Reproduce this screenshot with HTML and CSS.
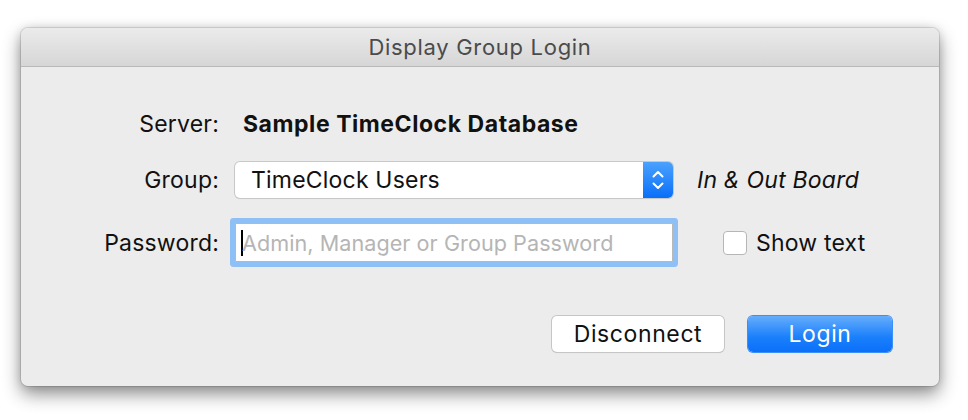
FILE: index.html
```html
<!DOCTYPE html>
<html>
<head>
<meta charset="utf-8">
<link rel="stylesheet" href="styles.css">
</head>
<body>
<div class="window">
  <div class="titlebar">Display Group Login</div>
  <div class="content">
    <div class="form">
      <div class="label">Server:</div>
      <div class="server-value">Sample TimeClock Database</div>
      <div></div>

      <div class="label">Group:</div>
      <div class="popup">
        <span class="popup-text">TimeClock Users</span>
        <span class="stepper">
          <svg width="14" height="24" viewBox="0 0 14 24"><path d="M2.5 8.5 L7 4 L11.5 8.5" fill="none" stroke="#fff" stroke-width="2" stroke-linecap="round" stroke-linejoin="round"/><path d="M2.5 15.5 L7 20 L11.5 15.5" fill="none" stroke="#fff" stroke-width="2" stroke-linecap="round" stroke-linejoin="round"/></svg>
        </span>
      </div>
      <div class="board">In &amp; Out Board</div>

      <div class="label">Password:</div>
      <div class="field"><span class="caret"></span><span class="placeholder">Admin, Manager or Group Password</span></div>
      <div class="show"><span class="checkbox"></span><span>Show text</span></div>
    </div>
    <div class="buttons">
      <div class="btn">Disconnect</div>
      <div class="btn primary">Login</div>
    </div>
  </div>
</div>
</body>
</html>
```

FILE: styles.css
```css
html, body {
  margin: 0;
  padding: 0;
  background: #ffffff;
}
body {
  font-family: "Inter", "Liberation Sans", Arial, sans-serif;
  padding: 28px 0 0 21px;
  height: 420px;
  box-sizing: border-box;
}
.window {
  width: 918px;
  height: 358px;
  background: #ececec;
  border-radius: 7px;
  box-shadow: 0 8px 18px rgba(0,0,0,0.45), 0 0 0 1px rgba(0,0,0,0.10), 0 0 10px rgba(0,0,0,0.12);
  overflow: hidden;
  display: flex;
  flex-direction: column;
}
.titlebar {
  height: 39px;
  box-sizing: border-box;
  border-bottom: 1px solid #b9b9b9;
  background: linear-gradient(#ebebeb, #d6d6d6);
  text-align: center;
  font-size: 22px;
  line-height: 39px;
  color: #4b4b4b;
  letter-spacing: 0.7px;
}
.content {
  flex: 1;
  display: flex;
  flex-direction: column;
  padding-top: 41px;
}
.form {
  display: grid;
  grid-template-columns: 198px 438px auto;
  column-gap: 16px;
  row-gap: 0;
  align-items: center;
  font-size: 23px;
  letter-spacing: 0.2px;
  color: #111;
}
.label {
  text-align: right;
}
.server-value {
  font-weight: 700;
  padding-left: 8px;
  height: 32px;
  line-height: 32px;
  letter-spacing: 0.55px;
}
.form > .label:nth-child(1) { height: 32px; line-height: 32px; }
.popup {
  margin-top: 22px;
  height: 36px;
  box-sizing: border-box;
  background: #fff;
  border-radius: 5px;
  box-shadow: 0 0 0 1px #c8c8c8, 0 1px 1px rgba(0,0,0,0.12);
  display: flex;
  align-items: center;
  overflow: hidden;
}
.popup-text {
  flex: 1;
  padding-left: 16px;
}
.stepper {
  width: 30px;
  height: 36px;
  background: linear-gradient(#4aa2fd, #0a6ff9);
  display: flex;
  align-items: center;
  justify-content: center;
}
.board {
  margin-top: 22px;
  margin-left: 8px;
  font-style: italic;
}
.form > .label:nth-child(4) { margin-top: 22px; }
.form > .label:nth-child(7) { margin-top: 25px; }
.field {
  margin-top: 25px;
  height: 39px;
  box-sizing: border-box;
  background: #fff;
  border: 1px solid #b8b8b8;
  box-shadow: 0 0 0 5px #8fc0f5;
  border-radius: 1px;
  display: flex;
  align-items: center;
  padding-left: 5px;
}
.caret {
  width: 2px;
  height: 26px;
  background: #000;
}
.placeholder {
  color: #b5b5b5;
  font-size: 21.6px;
  letter-spacing: 0.05px;
  margin-left: -1px;
}
.show {
  margin-top: 25px;
  margin-left: 34px;
  display: flex;
  align-items: center;
  gap: 9px;
}
.checkbox {
  width: 24px;
  height: 24px;
  box-sizing: border-box;
  background: #fff;
  border: 1px solid #b6b6b6;
  border-radius: 4px;
}
.buttons {
  display: flex;
  gap: 24px;
  padding-left: 531px;
  margin-top: 54px;
  font-size: 23px;
  letter-spacing: 0.6px;
}
.btn {
  height: 36px;
  box-sizing: border-box;
  line-height: 36px;
  text-align: center;
  border-radius: 5px;
  background: #fff;
  box-shadow: 0 0 0 1px #c6c6c6, 0 1px 1px rgba(0,0,0,0.15);
  width: 172px;
  color: #111;
}
.btn.primary {
  width: 144px;
  background: linear-gradient(#65adfc, #1a7ffb 60%, #0a70f9);
  box-shadow: 0 0 0 1px #3c8ff8;
  color: #fff;
}
```
